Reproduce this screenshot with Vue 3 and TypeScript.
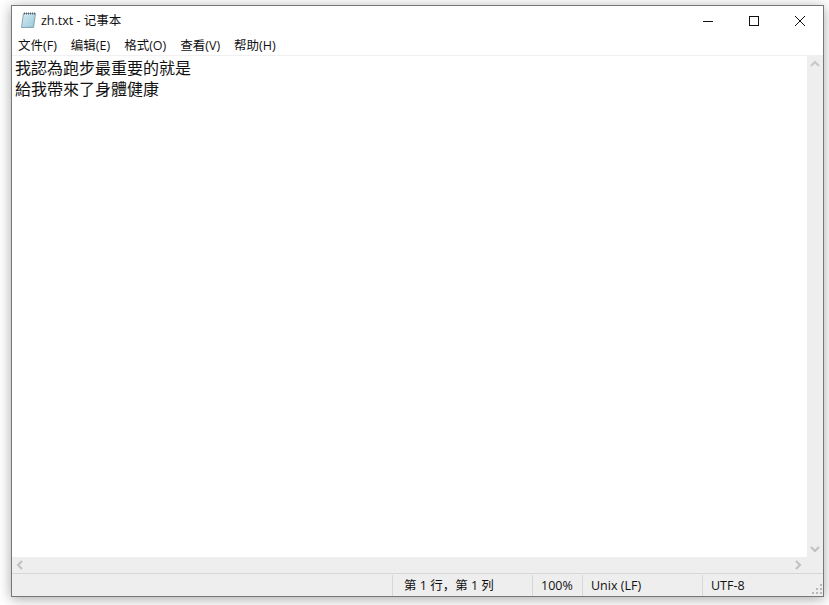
<script setup lang="ts">
const menus: string[] = ['文件(F)', '编辑(E)', '格式(O)', '查看(V)', '帮助(H)']
const text: string = ['我認為跑步最重要的就是', '給我帶來了身體健康'].join('\n')
</script>

<template>
  <div class="stage">
    <div class="window">
      <header class="titlebar">
        <svg class="app-icon" width="17" height="18" viewBox="0 0 17 18">
          <defs>
            <linearGradient id="pad" x1="0" y1="0" x2="1" y2="1">
              <stop offset="0" stop-color="#e4f2f8" />
              <stop offset="1" stop-color="#8cc4d8" />
            </linearGradient>
          </defs>
          <path d="M3.5 2.5H15.5L13.5 16.5H1.5Z" fill="url(#pad)" stroke="#8aa3af" stroke-width="1" />
          <path d="M4 2.5H15.5" stroke="#55626a" stroke-width="2" stroke-dasharray="1 1" />
          <path d="M4 6H13M3.5 8.5H12.5M3.2 11H12.2M3 13.5H12" stroke="#b7d8e5" stroke-width="0.8" />
        </svg>
        <span class="title">zh.txt - 记事本</span>
        <div class="controls">
          <svg class="ctl" width="46" height="28" viewBox="0 0 46 28"><path d="M18 14.5H28" stroke="#111" fill="none" /></svg>
          <svg class="ctl" width="46" height="28" viewBox="0 0 46 28"><rect x="18.5" y="9.5" width="9" height="9" stroke="#111" fill="none" /></svg>
          <svg class="ctl" width="46" height="28" viewBox="0 0 46 28"><path d="M18 9L28 19M28 9L18 19" stroke="#111" fill="none" /></svg>
        </div>
      </header>

      <nav class="menubar">
        <span v-for="m in menus" :key="m" class="menu">{{ m }}</span>
      </nav>

      <div class="body">
        <div class="editor">{{ text }}</div>
        <div class="vscroll">
          <svg width="16" height="16" viewBox="0 0 16 16"><path d="M4 10L8 6L12 10" stroke="#c8c8c8" stroke-width="2" fill="none" /></svg>
          <svg width="16" height="16" viewBox="0 0 16 16"><path d="M4 6L8 10L12 6" stroke="#c0c0c0" stroke-width="2" fill="none" /></svg>
        </div>
      </div>

      <div class="hscroll">
        <svg width="16" height="16" viewBox="0 0 16 16"><path d="M10 4L6 8L10 12" stroke="#c0c0c0" stroke-width="2" fill="none" /></svg>
        <svg class="hright" width="16" height="16" viewBox="0 0 16 16"><path d="M6 4L10 8L6 12" stroke="#c0c0c0" stroke-width="2" fill="none" /></svg>
      </div>

      <footer class="status">
        <span class="cell spacer"></span>
        <span class="cell pos">第 1 行，第 1 列</span>
        <span class="cell zoom">100%</span>
        <span class="cell eol">Unix (LF)</span>
        <span class="cell enc">UTF-8</span>
        <svg class="grip" width="12" height="12" viewBox="0 0 12 12" fill="#b8b8b8">
          <rect x="8" y="0" width="2" height="2" />
          <rect x="4" y="4" width="2" height="2" /><rect x="8" y="4" width="2" height="2" />
          <rect x="0" y="8" width="2" height="2" /><rect x="4" y="8" width="2" height="2" /><rect x="8" y="8" width="2" height="2" />
        </svg>
      </footer>
    </div>
  </div>
</template>

<style>
html, body { margin: 0; background: #fff; }
</style>

<style scoped>
.stage {
  width: 829px;
  height: 605px;
  box-sizing: border-box;
  padding: 5px 5px 8px 11px;
  background: #fff;
  overflow: hidden;
  font-family: "Noto Sans CJK SC", "Noto Sans", sans-serif;
  color: #111;
}
.window {
  position: relative;
  width: 813px;
  height: 592px;
  box-sizing: border-box;
  border: 1px solid #777;
  background: #fff;
  display: flex;
  flex-direction: column;
  box-shadow: 0 2px 12px rgba(0, 0, 0, 0.35);
}
.titlebar {
  height: 29px;
  display: flex;
  align-items: center;
  flex: none;
}
.app-icon { margin-left: 8px; margin-top: -1px; }
.title {
  margin-left: 4px;
  font-size: 12.5px;
  font-family: "Open Sans", "Noto Sans CJK SC", sans-serif;
  line-height: 16px;
}
.controls { margin-left: auto; display: flex; margin-top: 1px; }
.ctl { display: block; }
.menubar {
  height: 19px;
  margin-top: 1px;
  display: flex;
  align-items: center;
  flex: none;
  padding-left: 6px;
  gap: 14px;
  font-size: 12.5px;
  font-family: "Open Sans", "Noto Sans CJK SC", sans-serif;
}
.menu { line-height: 16px; white-space: nowrap; }
.body {
  flex: 1;
  display: flex;
  min-height: 0;
  border-top: 1px solid #f0f0f0;
}
.editor {
  flex: 1;
  padding: 1px 0 0 3px;
  font-size: 16px;
  line-height: 21px;
  font-family: "Noto Sans CJK TC", sans-serif;
  color: #111;
  white-space: pre;
}
.vscroll {
  width: 16px;
  flex: none;
  background: #eeeeee;
  display: flex;
  flex-direction: column;
  justify-content: space-between;
}
.vscroll svg { display: block; }
.hscroll {
  height: 16px;
  flex: none;
  background: #eeeeee;
  display: flex;
}
.hscroll svg { display: block; }
.hright { margin-left: auto; margin-right: 17px; }
.status {
  position: relative;
  height: 23px;
  flex: none;
  box-sizing: border-box;
  border-top: 1px solid #d7d7d7;
  background: #eeeeee;
  display: flex;
  font-size: 12.5px;
  font-family: "Open Sans", "Noto Sans CJK SC", sans-serif;
  line-height: 22px;
  white-space: pre;
}
.cell { display: block; box-sizing: border-box; height: 21px; margin-top: 1px; line-height: 21px; }
.spacer { width: 380px; flex: none; }
.pos { width: 140px; padding-left: 11px; border-left: 1px solid #d7d7d7; }
.zoom { width: 50px; padding-left: 8px; border-left: 1px solid #d7d7d7; }
.eol { width: 120px; padding-left: 8px; border-left: 1px solid #d7d7d7; }
.enc { padding-left: 8px; border-left: 1px solid #d7d7d7; }
.grip { position: absolute; right: -1px; bottom: 0px; }
</style>
